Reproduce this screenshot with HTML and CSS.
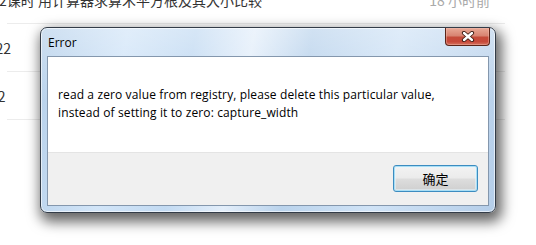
FILE: index.html
```html
<!DOCTYPE html>
<html lang="zh-CN">
<head>
  <meta charset="UTF-8">
  <title>Error</title>
  <link rel="stylesheet" href="styles.css">
</head>
<body>
  <ul class="feed">
    <li class="feed-item">
      <span class="feed-title">第2课时 用计算器求算术平方根及其大小比较</span>
      <span class="feed-time">18 小时前</span>
    </li>
    <li class="feed-item">
      <span class="feed-title second">2022</span>
      <span class="feed-time">18 小时前</span>
    </li>
    <li class="feed-item">
      <span class="feed-title third">12</span>
      <span class="feed-time">18 小时前</span>
    </li>
  </ul>

  <div class="dialog">
    <div class="dialog-titlebar">
      <span class="dialog-title">Error</span>
      <button class="dialog-close" aria-label="关闭">
        <svg width="14" height="11" viewBox="0 0 14 11">
          <path d="M3 2 L11 9 M11 2 L3 9" stroke="#3a1a12" stroke-width="4.2" stroke-linecap="round"/>
          <path d="M3 2 L11 9 M11 2 L3 9" stroke="#ffffff" stroke-width="2.4" stroke-linecap="round"/>
        </svg>
      </button>
    </div>
    <div class="dialog-client">
      <div class="dialog-message">read a zero value from registry, please delete this particular value,<br>instead of setting it to zero: capture_width</div>
      <div class="dialog-footer">
        <button class="dialog-btn">确定</button>
      </div>
    </div>
  </div>
</body>
</html>
```

FILE: styles.css
```css
body {
  margin: 0;
  background: #ffffff;
  overflow: hidden;
  font-family: "Noto Sans CJK SC", "Noto Sans", sans-serif;
}

/* --- page behind the dialog --- */
.feed {
  list-style: none;
  margin: -24px 31px 0 7px;
  padding: 0;
}
.feed-item {
  display: flex;
  align-items: center;
  justify-content: space-between;
  height: 47px;
  border-bottom: 1px solid #ececec;
  padding-right: 15px;
}
.feed-title {
  margin-left: -22px;
  font-size: 14px;
  color: #333333;
  white-space: nowrap;
}
.feed-title.second { margin-left: -27px; }
.feed-title.third { margin-left: -17px; }
.feed-time {
  font-size: 14px;
  color: #aaaaaa;
}

/* --- windows 7 style message box --- */
.dialog {
  position: absolute;
  left: 40px;
  top: 27px;
  width: 456px;
  height: 186px;
  box-sizing: border-box;
  display: flex;
  flex-direction: column;
  padding: 0 6px 6px 6px;
  border: 1px solid #333c48;
  border-radius: 7px;
  background:
    linear-gradient(180deg, #ffffff55 0%, #ffffff00 40%),
    linear-gradient(100deg, #b6d0ea 0%, #d2e5f8 18%, #c2daf2 32%, #e3eefa 44%, #bad3ec 56%, #d0e3f6 74%, #b5cee9 100%);
  box-shadow: inset 0 0 0 1px #ffffff99, 3px 6px 13px 3px rgba(0, 0, 0, 0.6);
}
.dialog-titlebar {
  height: 28px;
  display: flex;
  justify-content: space-between;
  align-items: flex-start;
}
.dialog-title {
  align-self: center;
  margin-left: 1px;
  font-family: "Open Sans", "Noto Sans", sans-serif;
  font-size: 12px;
  color: #000000;
}
.dialog-close {
  width: 45px;
  height: 18px;
  margin: 0 -1px 0 0;
  padding: 0;
  display: flex;
  align-items: center;
  justify-content: center;
  border: 1px solid #5b2418;
  border-top: none;
  border-radius: 0 0 4px 4px;
  background: linear-gradient(180deg, #e9a996 0%, #d88472 45%, #c54b3a 55%, #c7493a 80%, #d6735f 100%);
  box-shadow: inset 0 0 0 1px #f2c3b666;
}
.dialog-client {
  flex: 1;
  display: flex;
  flex-direction: column;
  border: 1px solid #8497ad;
  background: #ffffff;
}
.dialog-message {
  height: 95px;
  box-sizing: border-box;
  padding: 29px 10px 0 10px;
  font-family: "Open Sans", "Noto Sans", sans-serif;
  font-size: 12px;
  letter-spacing: 0.12px;
  line-height: 18px;
  color: #000000;
}
.dialog-footer {
  flex: 1;
  display: flex;
  justify-content: flex-end;
  align-items: flex-start;
  padding: 12px 10px 0 0;
  background: #f0f0f0;
  border-top: 1px solid #e4e4e4;
}
.dialog-btn {
  width: 85px;
  height: 27px;
  padding: 0;
  border: 1px solid #3c8cc0;
  border-radius: 3px;
  background: linear-gradient(180deg, #f3f3f3 0%, #ebebeb 48%, #dddddd 52%, #cfcfcf 100%);
  box-shadow: inset 0 0 0 1px #a8def5, inset 0 0 0 2px #e6f6fd88;
  font-family: "Noto Sans CJK SC", sans-serif;
  font-size: 13px;
  color: #000000;
}
```
